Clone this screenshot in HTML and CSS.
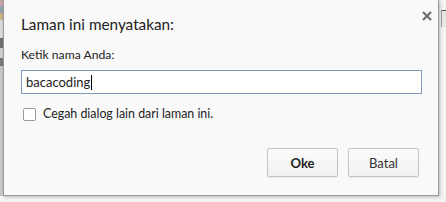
FILE: index.html
```html
<!DOCTYPE html>
<html>
<head>
<meta charset="utf-8">
<link rel="stylesheet" href="styles.css">
</head>
<body>
<div class="page">
  <div class="edge-left"></div>
  <div class="dialog">
    <div class="head">
      <div class="title">Laman ini menyatakan:</div>
      <button class="close" aria-label="Tutup">
        <svg width="10" height="10" viewBox="0 0 10 10"><path d="M1 1L9 9M9 1L1 9" stroke="#6d6d6d" stroke-width="2.2" stroke-linecap="butt"/></svg>
      </button>
    </div>
    <div class="prompt">Ketik nama Anda:</div>
    <div class="field"><span class="value">bacacoding</span><span class="caret"></span></div>
    <label class="check"><span class="box"></span><span>Cegah dialog lain dari laman ini.</span></label>
    <div class="actions">
      <button class="btn primary">Oke</button>
      <button class="btn">Batal</button>
    </div>
  </div>
  <div class="edge-right"><div class="tab"></div></div>
</div>
</body>
</html>
```
FILE: styles.css
```css
html, body {
  margin: 0;
  padding: 0;
  width: 446px;
  height: 202px;
  overflow: hidden;
  background: #f4f4f4;
  font-family: Lato, "Noto Sans", sans-serif;
}
.page {
  display: flex;
  align-items: flex-start;
  height: 202px;
}
.edge-left {
  width: 3px;
  height: 196px;
  background: linear-gradient(#c9a6ae 0 6px, #8fa6b0 6px 13px, #c8b48a 13px 20px, #d9d9d9 20px 38px, #707070 38px 48px, #cfcfcf 48px 58px, #777 58px 66px, #c7c7c7 66px);
}
.dialog {
  width: 436px;
  height: 196px;
  box-sizing: border-box;
  background: #f9f9f9;
  border: 1px solid #9a9a9a;
  border-top: none;
  box-shadow: 1px 1px 3px rgba(0,0,0,0.25);
  padding: 0 17px 0 17px;
  display: flex;
  flex-direction: column;
  color: #222;
}
.head {
  display: flex;
  justify-content: space-between;
  align-items: flex-start;
  padding-top: 14px;
}
.title {
  font-size: 15.3px;
  line-height: 20px;
  color: #222;
}
.close {
  border: none;
  background: none;
  padding: 0;
  margin: -4px -12px 0 0;
  width: 12px;
  height: 12px;
  display: flex;
  align-items: center;
  justify-content: center;
}
.prompt {
  margin-top: 13px;
  font-size: 12.2px;
  line-height: 16px;
  color: #222;
}
.field {
  margin-top: 7px;
  height: 24px;
  width: 401px;
  box-sizing: border-box;
  border: 1px solid #7b9bb8;
  background: #fff;
  display: flex;
  align-items: center;
  padding-left: 4px;
  font-size: 13px;
  color: #222;
}
.caret {
  width: 1px;
  height: 15px;
  background: #000;
  margin-left: 1px;
}
.check {
  margin-top: 12px;
  display: flex;
  align-items: center;
  gap: 7px;
  padding-left: 2px;
  font-size: 12.4px;
  line-height: 16px;
  color: #222;
}
.box {
  width: 13px;
  height: 13px;
  box-sizing: border-box;
  border: 1px solid #9a9a9a;
  border-radius: 2px;
  background: #fff;
}
.actions {
  margin-top: 26px;
  display: flex;
  justify-content: flex-end;
  gap: 10px;
  padding-right: 2px;
}
.btn {
  width: 71px;
  height: 29px;
  box-sizing: border-box;
  border: 1px solid #c4c4c4;
  border-radius: 2px;
  background: linear-gradient(#fbfbfb, #f1f1f1);
  box-shadow: 0 1px 1px rgba(0,0,0,0.08);
  font-family: inherit;
  font-size: 13px;
  color: #333;
  padding: 0;
}
.btn.primary {
  font-weight: bold;
  color: #222;
}
.edge-right {
  width: 7px;
  height: 196px;
  display: flex;
  justify-content: flex-end;
}
.tab {
  width: 4px;
  height: 16px;
  margin-top: 10px;
  background: #e6e6e6;
  border-top: 1px solid #555;
  border-left: 1px solid #999;
}
```
